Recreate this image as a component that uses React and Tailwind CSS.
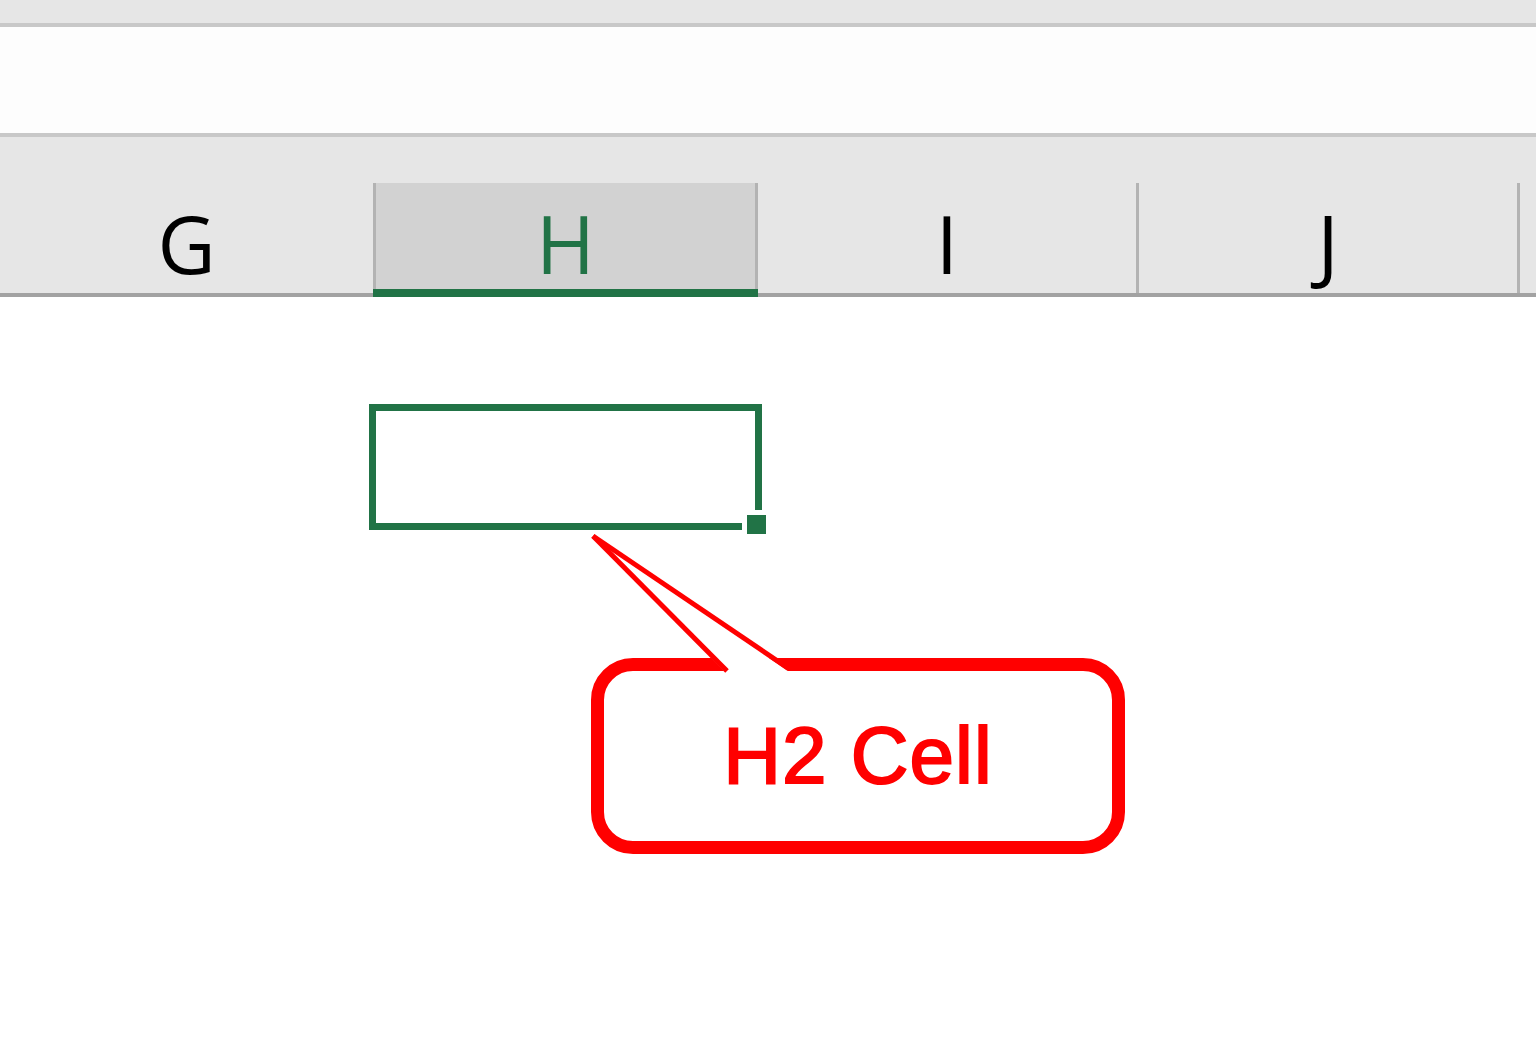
import React from 'react';

const headerFont = { fontFamily: '"Open Sans", "Noto Sans", sans-serif' };

const Sep = () => <div className="w-[3px] h-full bg-[#b3b3b3] shrink-0" />;

const ColHead = ({ label, width, active }) => (
  <div
    className={`h-full shrink-0 flex justify-center pt-[20px] ${width} ${
      active ? 'bg-[#d2d2d2] text-[#217346]' : 'text-black'
    }`}
  >
    <span className="text-[80px] leading-none" style={headerFont}>
      {label}
    </span>
  </div>
);

export default function App() {
  return (
    <div className="relative w-[1536px] h-[1056px] bg-white overflow-hidden">
      {/* ribbon edge + formula bar */}
      <div className="h-[23px] bg-[#e6e6e6]" />
      <div className="h-[4px] bg-[#c8c8c8]" />
      <div className="h-[106px] bg-[#fdfdfd]" />
      <div className="h-[4px] bg-[#c8c8c8]" />

      {/* column headers */}
      <div className="h-[156px] bg-[#e6e6e6] flex items-end">
        <div className="h-[110px] flex w-full">
          <ColHead label="G" width="w-[373px]" />
          <div className="h-full flex flex-col shrink-0">
            <div className="flex flex-1">
              <Sep />
              <ColHead label="H" width="w-[379px]" active />
              <Sep />
            </div>
            <div className="h-[4px] bg-[#217346]" />
          </div>
          <ColHead label="I" width="w-[378px]" />
          <Sep />
          <ColHead label="J" width="w-[378px]" />
          <Sep />
          <div className="flex-1" />
        </div>
      </div>
      <div className="h-[4px] bg-[#a2a2a2] flex">
        <div className="ml-[373px] w-[385px] bg-[#217346]" />
      </div>

      {/* sheet body with the active cell H2 */}
      <div className="pl-[369px] pt-[107px]">
        <div className="relative w-[393px] h-[126px] border-[7px] border-[#217346]">
          <div className="absolute -right-[7px] -bottom-[7px] w-[20px] h-[20px] bg-white" />
          <div className="absolute -right-[11px] -bottom-[11px] w-[19px] h-[19px] bg-[#217346]" />
        </div>
      </div>

      {/* callout annotation */}
      <div className="absolute left-[591px] top-[658px] w-[534px] h-[196px] border-[13px] border-[#ff0000] rounded-[42px] flex items-center justify-center">
        <span
          className="text-[80px] leading-none text-[#ff0000] tracking-[1px] [-webkit-text-stroke:2px_#ff0000]"
          style={{ fontFamily: '"Liberation Sans", Arial, sans-serif' }}
        >
          H2 Cell
        </span>
      </div>
      <svg
        className="absolute left-[580px] top-[520px]"
        width="230"
        height="170"
        viewBox="580 520 230 170"
      >
        <polygon points="593,536 727,674 792,674 593,536" fill="#ffffff" />
        <line x1="593" y1="536" x2="727" y2="671" stroke="#ff0000" strokeWidth="5" />
        <line x1="593" y1="536" x2="788" y2="668" stroke="#ff0000" strokeWidth="5" />
      </svg>
    </div>
  );
}
